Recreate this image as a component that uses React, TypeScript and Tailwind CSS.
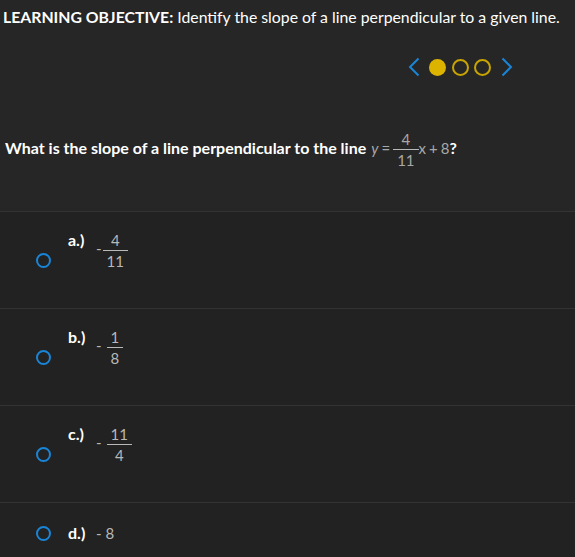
import React from "react";

const Frac = ({ n, d, pad = "px-[4px]" }: { n: string; d: string; pad?: string }) => (
  <span className={`inline-flex flex-col items-center ${pad}`}>
    <span className="leading-[16px]">{n}</span>
    <span className="h-px my-[2px] w-[calc(100%+8px)] bg-[#b8b8b8]" />
    <span className="leading-[16px]">{d}</span>
  </span>
);

const Radio = () => (
  <span className="block w-[15px] h-[15px] rounded-full border-2 border-[#1a85d6] shrink-0" />
);

const Chevron = ({ dir }: { dir: "left" | "right" }) => (
  <svg width="12" height="20" viewBox="0 0 12 20" className="shrink-0">
    <path
      d={dir === "left" ? "M10.5 1.5 L2 10 L10.5 18.5" : "M1.5 1.5 L10 10 L1.5 18.5"}
      fill="none"
      stroke="#1a85d6"
      strokeWidth="2"
    />
  </svg>
);

type Opt = { label: string; n: string; d: string; gap: string };

const options: Opt[] = [
  { label: "a.)", n: "4", d: "11", gap: "ml-[1px]" },
  { label: "b.)", n: "1", d: "8", gap: "ml-[5px]" },
  { label: "c.)", n: "11", d: "4", gap: "ml-[5px]" },
];

const Option = ({ opt }: { opt: Opt }) => (
  <div className="border-t border-[#333333] h-[97px] flex items-center pl-[36px]">
    <Radio />
    <div className="flex items-center ml-[17px] mb-[22px]">
      <span className="self-start mt-[3px] leading-[16px] font-bold text-white text-[16px] w-[28px]">{opt.label}</span>
      <span className="text-[#b8b8b8] text-[15px] leading-[16px] mb-[3px]">-</span>
      <span className={`text-[#b8b8b8] text-[15px] ${opt.gap}`}>
        <Frac n={opt.n} d={opt.d} />
      </span>
    </div>
  </div>
);

export default function App() {
  return (
    <div
      className="w-full min-h-screen bg-[#222222] overflow-hidden"
      style={{ fontFamily: "Lato, 'Liberation Sans', sans-serif" }}
    >
      <div className="h-[211px] bg-[#262626] flex flex-col">
        <div className="pl-[3px] pt-[7px] text-[15.8px] leading-[20px] text-white">
          <span className="font-bold">LEARNING OBJECTIVE:</span> Identify the slope of a line perpendicular to a given line.
        </div>
        <div className="flex justify-end items-center pr-[62px] mt-[30px]">
          <Chevron dir="left" />
          <span className="ml-[9px] w-[17px] h-[17px] rounded-full bg-[#dcb400]" />
          <span className="ml-[6px] w-[17px] h-[17px] rounded-full border-2 border-[#c9a400]" />
          <span className="ml-[5px] w-[17px] h-[17px] rounded-full border-2 border-[#c9a400]" />
          <span className="ml-[10px] flex">
            <Chevron dir="right" />
          </span>
        </div>
        <div className="flex items-center pl-[5px] mt-[51px] text-[16px]">
          <span className="font-bold text-white">What is the slope of a line perpendicular to the line</span>
          <span className="ml-[5px] text-[#a8a8a8] italic text-[15px]">y</span>
          <span className="ml-[3px] text-[#a8a8a8] text-[15px]">=</span>
          <span className="ml-[4px] text-[#a8a8a8] text-[15px]">
            <Frac n="4" d="11" pad="px-[3px]" />
          </span>
          <span className="text-[#a8a8a8] text-[15px] ml-[1px]">x</span>
          <span className="text-[#a8a8a8] text-[15px] ml-[3px]">+</span>
          <span className="text-[#a8a8a8] text-[15px] ml-[3px]">8</span>
          <span className="font-bold text-white">?</span>
        </div>
      </div>
      {options.map((o) => (
        <Option key={o.label} opt={o} />
      ))}
      <div className="border-t border-[#333333] h-[61px] flex items-center pl-[36px]">
        <Radio />
        <span className="ml-[17px] font-bold text-white text-[16px] w-[28px]">d.)</span>
        <span className="text-[#b8b8b8] text-[15px]">- 8</span>
      </div>
    </div>
  );
}
